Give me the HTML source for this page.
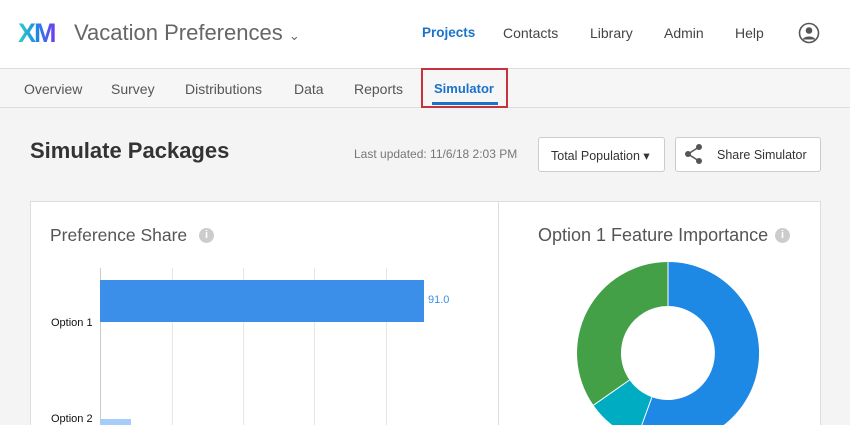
<html><head><style>
html,body{margin:0;width:850px;height:425px;overflow:hidden}
body{font-family:"Liberation Sans",sans-serif;background:#f4f4f4;position:relative}
.a{position:absolute;white-space:nowrap}
</style></head><body>
<div class="a" style="left:0;top:0;width:850px;height:68px;background:#fff;border-bottom:1px solid #ddd"></div>
<div class="a" style="left:18px;top:18px;font-size:27px;font-weight:bold;letter-spacing:-2px;background:linear-gradient(90deg,#2ad4c4,#1e88e5,#6f3cf0);-webkit-background-clip:text;color:transparent">XM</div>
<div class="a" style="left:74px;top:20px;font-size:22px;color:#666">Vacation Preferences <span style="font-size:13px">⌄</span></div>
<div class="a" style="left:422px;top:25px;font-size:13.5px;color:#1a73c8;font-weight:bold">Projects</div>
<div class="a" style="left:503px;top:25px;font-size:14px;color:#444">Contacts</div>
<div class="a" style="left:590px;top:25px;font-size:14px;color:#444">Library</div>
<div class="a" style="left:664px;top:25px;font-size:14px;color:#444">Admin</div>
<div class="a" style="left:735px;top:25px;font-size:14px;color:#444">Help</div>
<svg class="a" style="left:798px;top:22px" width="22" height="22" viewBox="0 0 22 22"><circle cx="11" cy="11" r="9.5" fill="none" stroke="#555" stroke-width="1.6"/><circle cx="11" cy="8.5" r="3.3" fill="#555"/><path d="M4.5 17.5c2-4 11-4 13 0" fill="#555"/></svg>
<div class="a" style="left:0;top:69px;width:850px;height:38px;background:#f6f6f6;border-bottom:1px solid #ddd"></div>
<div class="a" style="left:24px;top:81px;font-size:14px;color:#555">Overview</div>
<div class="a" style="left:111px;top:81px;font-size:14px;color:#555">Survey</div>
<div class="a" style="left:185px;top:81px;font-size:14px;color:#555">Distributions</div>
<div class="a" style="left:294px;top:81px;font-size:14px;color:#555">Data</div>
<div class="a" style="left:354px;top:81px;font-size:14px;color:#555">Reports</div>
<div class="a" style="left:421px;top:68px;width:87px;height:40px;border:2px solid #c8323c;box-sizing:border-box"></div>
<div class="a" style="left:434px;top:81px;font-size:13px;color:#1a73c8;font-weight:bold">Simulator</div>
<div class="a" style="left:432px;top:102px;width:66px;height:3px;background:#1a73c8"></div>
<div class="a" style="left:30px;top:138px;font-size:22px;font-weight:bold;color:#333">Simulate Packages</div>
<div class="a" style="left:354px;top:147px;font-size:12px;color:#777">Last updated: 11/6/18 2:03 PM</div>
<div class="a" style="left:538px;top:137px;width:127px;height:35px;border:1px solid #ccc;border-radius:3px;background:#fff;box-sizing:border-box;font-size:12.5px;color:#333;padding:10px 0 0 12px">Total Population ▾</div>
<div class="a" style="left:675px;top:137px;width:146px;height:35px;border:1px solid #ccc;border-radius:3px;background:#fff;box-sizing:border-box;font-size:12.5px;color:#333;padding:10px 0 0 41px">Share Simulator</div>
<svg class="a" style="left:684px;top:143px" width="20" height="22"><path d="M4 11L15 4M4 11L15 18" stroke="#555" stroke-width="1.5"/><circle cx="4" cy="11" r="3" fill="#555"/><circle cx="15" cy="4" r="3" fill="#555"/><circle cx="15" cy="18" r="3" fill="#555"/></svg>
<div class="a" style="left:30px;top:201px;width:791px;height:240px;background:#fff;border:1px solid #ddd;box-sizing:border-box"></div>
<div class="a" style="left:498px;top:201px;width:1px;height:224px;background:#ddd"></div>
<div class="a" style="left:50px;top:225px;font-size:17.5px;color:#555">Preference Share</div>
<div class="a" style="left:199px;top:228px;width:15px;height:15px;border-radius:50%;background:#ccc;color:#fff;font-size:11px;text-align:center;line-height:15px;font-weight:bold">i</div>
<div class="a" style="left:538px;top:225px;font-size:18px;color:#555">Option 1 Feature Importance</div>
<div class="a" style="left:775px;top:228px;width:15px;height:15px;border-radius:50%;background:#ccc;color:#fff;font-size:11px;text-align:center;line-height:15px;font-weight:bold">i</div>
<div class="a" style="left:100px;top:268px;width:1px;height:157px;background:#ccc"></div>
<div class="a" style="left:172px;top:268px;width:1px;height:157px;background:#e6e6e6"></div>
<div class="a" style="left:243px;top:268px;width:1px;height:157px;background:#e6e6e6"></div>
<div class="a" style="left:314px;top:268px;width:1px;height:157px;background:#e6e6e6"></div>
<div class="a" style="left:386px;top:268px;width:1px;height:157px;background:#e6e6e6"></div>
<div class="a" style="left:100px;top:280px;width:324px;height:42px;background:#3b8fe8"></div>
<div class="a" style="left:428px;top:294px;font-size:11px;color:#3b8fe8">91.0</div>
<div class="a" style="left:51px;top:317px;font-size:11px;color:#111">Option 1</div>
<div class="a" style="left:100px;top:419px;width:31px;height:10px;background:#a6cdf5"></div>
<div class="a" style="left:51px;top:413px;font-size:11px;color:#111">Option 2</div>
<svg class="a" style="left:577px;top:262px" width="182" height="182" viewBox="-91 -91 182 182">
<path d="M0 -91A91 91 0 1 1 -31.1 85.5L-16.1 44.2A47 47 0 1 0 0 -47Z" fill="#1e88e5"/>
<path d="M-31.1 85.5A91 91 0 0 1 -74.5 52.2L-38.5 27A47 47 0 0 0 -16.1 44.2Z" fill="#00acc1"/>
<path d="M-74.5 52.2A91 91 0 0 1 0 -91L0 -47A47 47 0 0 0 -38.5 27Z" fill="#43a047"/>
<path d="M0 -91V-47M-31.1 85.5L-16.1 44.2M-74.5 52.2L-38.5 27" stroke="#fff" stroke-width="1"/>
</svg>
</body></html>
